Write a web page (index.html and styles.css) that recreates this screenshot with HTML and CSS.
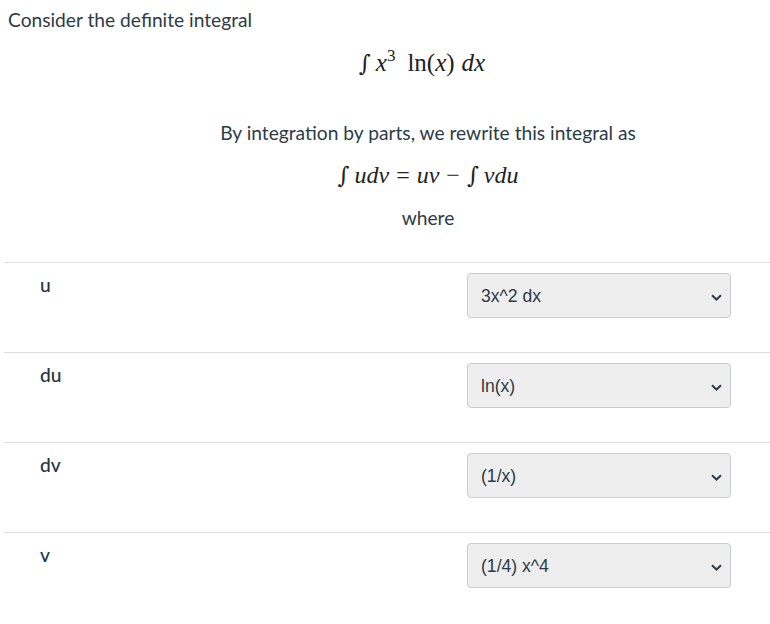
FILE: index.html
```html
<!DOCTYPE html>
<html>
<head>
<meta charset="utf-8">
<link rel="stylesheet" href="styles.css">
</head>
<body>
<div class="page">
  <p class="intro">Consider the definite integral</p>
  <div class="center">
    <div class="math m1"><span class="int">∫</span><i>x</i><sup>3</sup><span class="sp"></span>ln(<i>x</i>)<span class="sp2"></span><i>dx</i></div>
    <p class="txt t1">By integration by parts, we rewrite this integral as</p>
    <div class="math m2"><span class="int">∫</span><i>udv</i><span class="op">=</span><i>uv</i><span class="op">−</span><span class="int">∫</span><i>vdu</i></div>
    <p class="txt t2">where</p>
  </div>
  <div class="rows">
    <div class="row">
      <div class="label">u</div>
      <div class="select"><span>3x^2 dx</span><svg class="chev" width="11" height="7" viewBox="0 0 11 7"><path d="M1 1.2 L5.5 5.5 L10 1.2" fill="none" stroke="#2d3b45" stroke-width="2"/></svg></div>
    </div>
    <div class="row">
      <div class="label">du</div>
      <div class="select"><span>ln(x)</span><svg class="chev" width="11" height="7" viewBox="0 0 11 7"><path d="M1 1.2 L5.5 5.5 L10 1.2" fill="none" stroke="#2d3b45" stroke-width="2"/></svg></div>
    </div>
    <div class="row">
      <div class="label">dv</div>
      <div class="select"><span>(1/x)</span><svg class="chev" width="11" height="7" viewBox="0 0 11 7"><path d="M1 1.2 L5.5 5.5 L10 1.2" fill="none" stroke="#2d3b45" stroke-width="2"/></svg></div>
    </div>
    <div class="row">
      <div class="label">v</div>
      <div class="select"><span>(1/4) x^4</span><svg class="chev" width="11" height="7" viewBox="0 0 11 7"><path d="M1 1.2 L5.5 5.5 L10 1.2" fill="none" stroke="#2d3b45" stroke-width="2"/></svg></div>
    </div>
  </div>
</div>
</body>
</html>
```

FILE: styles.css
```css
html, body {
  margin: 0;
  padding: 0;
  background: #ffffff;
}
body {
  font-family: Lato, "Liberation Sans", sans-serif;
  font-size: 19.2px;
  color: #2d3b45;
}
.page {
  width: 770px;
  overflow: hidden;
}
.intro {
  margin: 0;
  padding: 7px 0 0 8px;
  line-height: 26px;
}
.center {
  margin-left: 86px;
  text-align: center;
}
.math {
  font-family: "Liberation Serif", "DejaVu Serif", serif;
  font-size: 25px;
  color: #222;
  white-space: nowrap;
  line-height: 34px;
  height: 34px;
}
.math i {
  font-style: italic;
}
.math sup {
  font-size: 17px;
  vertical-align: 10px;
  line-height: 0;
}
.int {
  font-family: "DejaVu Serif", serif;
  font-style: italic;
  font-size: 23px;
  margin-right: 5px;
}
.sp {
  display: inline-block;
  width: 12px;
}
.sp2 {
  display: inline-block;
  width: 7px;
}
.op {
  padding: 0 7px;
  font-size: 24px;
}
.m1 {
  margin-top: 13px;
  margin-right: 12px;
}
.txt {
  margin: 0;
  line-height: 26px;
}
.t1 {
  margin-top: 40px;
}
.m2 {
  margin-top: 12px;
  font-size: 24px;
}
.t2 {
  margin-top: 13px;
}
.rows {
  margin-top: 31px;
  margin-left: 4px;
}
.row {
  display: grid;
  grid-template-columns: 463px 264px;
  height: 89px;
  border-top: 1px solid #dddddd;
}
.label {
  padding-left: 36px;
  padding-top: 9px;
  line-height: 26px;
  font-weight: 500;
  color: #273540;
}
.select {
  margin-top: 10px;
  box-sizing: border-box;
  height: 45px;
  background: #eeeeee;
  border: 1px solid #c7cdd1;
  border-radius: 4px;
  display: flex;
  align-items: center;
  justify-content: space-between;
  padding: 2px 8px 0 13px;
  font-family: "Liberation Sans", Arial, sans-serif;
  font-size: 17.6px;
  color: #2d3b45;
}
.chev {
  display: block;
  margin-top: 1px;
}
```
